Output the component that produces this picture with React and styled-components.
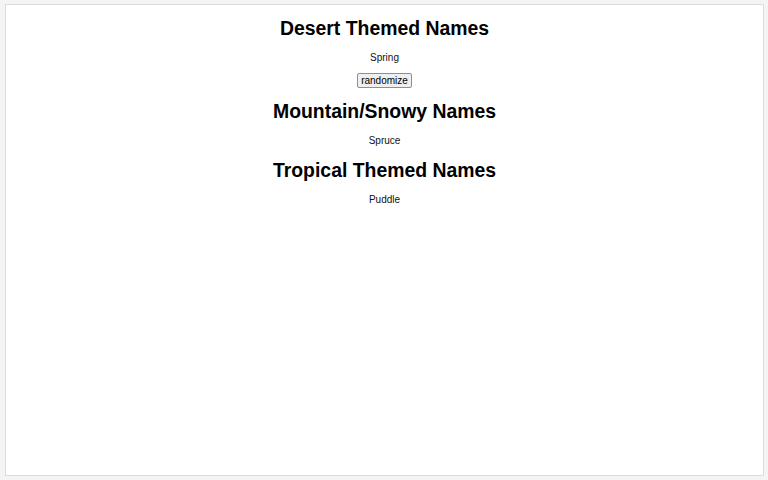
import { useState } from "react"
import styled, { createGlobalStyle } from "styled-components"

const GlobalStyle = createGlobalStyle`
  html, body {
    margin: 0;
    background: #f4f4f4;
  }
  body {
    font-family: "Liberation Sans", Arial, sans-serif;
    color: #000;
  }
`

const StPage = styled.div`
  padding: 4px 4px 4px 5px;
  height: 480px;
  box-sizing: border-box;
`

const StPanel = styled.main`
  background: #fff;
  border: 1px solid #dcdcdc;
  height: 100%;
  box-sizing: border-box;
  padding-top: 12px;
  display: flex;
  flex-direction: column;
  align-items: center;
`

const StTitle = styled.h2`
  font-size: 19.4px;
  line-height: 23px;
  font-weight: bold;
  margin: 0 0 11px;
`

const StName = styled.p`
  font-size: 10px;
  line-height: 13px;
  color: #111;
  margin: 0 0 ${p => p.$last ? 0 : 12}px;
`

const StButton = styled.button`
  font-family: "Liberation Sans", Arial, sans-serif;
  font-size: 10px;
  line-height: 13px;
  padding: 0 3px;
  height: 15px;
  margin: -3px 0 12px;
  border: 1px solid #8f8f8f;
  border-radius: 2px;
  background: #efefef;
  color: #000;
  cursor: pointer;
`

const desert = ["Spring", "Oasis", "Dune", "Mesa", "Sage", "Cactus"]

export default function App () {
  const [idx, setIdx] = useState(0)

  return (
    <StPage>
      <GlobalStyle />
      <StPanel>
        <StTitle>Desert Themed Names</StTitle>
        <StName>{desert[idx]}</StName>
        <StButton onClick={() => setIdx((idx + 1) % desert.length)}>randomize</StButton>

        <StTitle>Mountain/Snowy Names</StTitle>
        <StName>Spruce</StName>

        <StTitle>Tropical Themed Names</StTitle>
        <StName $last>Puddle</StName>
      </StPanel>
    </StPage>
  )
}
